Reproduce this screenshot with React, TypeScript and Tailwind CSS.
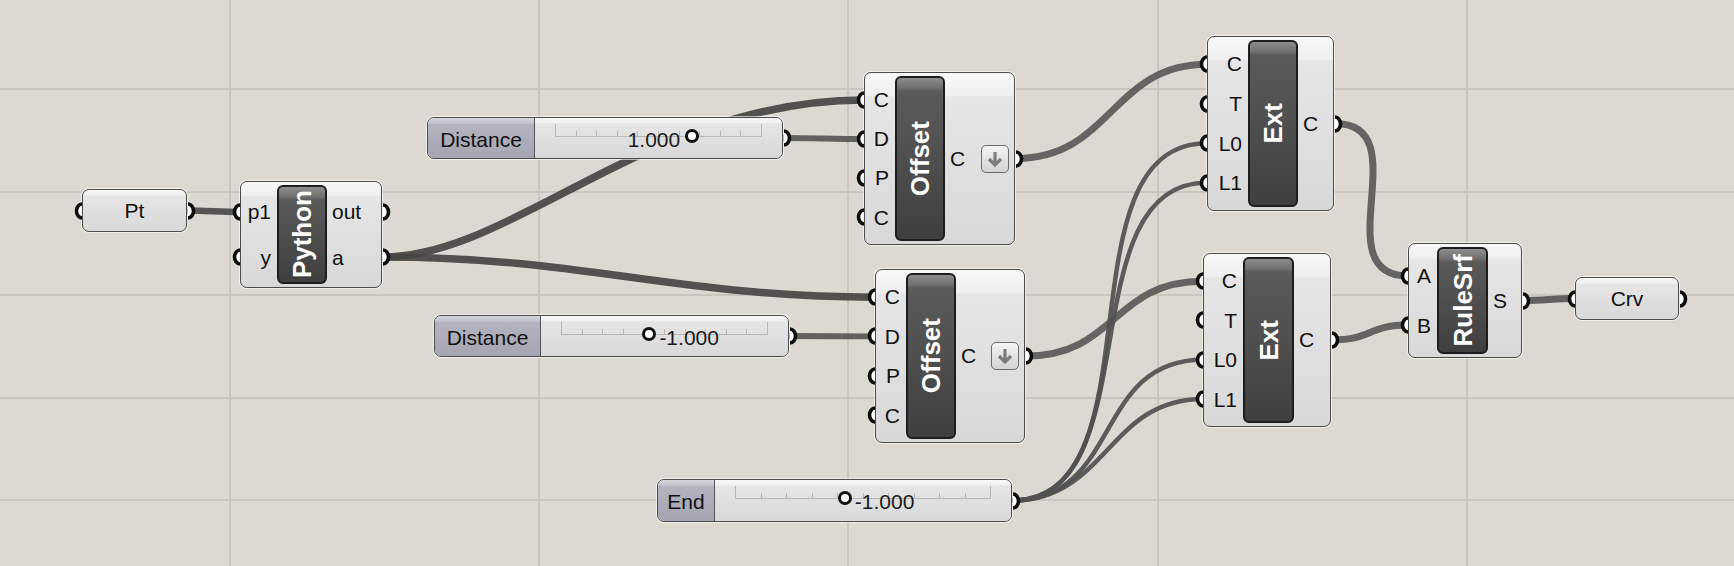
import React from "react";

type Comp = {
  name: string;
  x: number;
  y: number;
  h: number;
  lw: number;
  dw: number;
  rw: number;
  cls: string;
  lcls: string;
  dcls: string;
  rcls: string;
  ins: string[];
  outs: string[];
  button?: boolean;
};

type Param = { label: string; x: number; y: number; w: number; h: number; cls: string };

type Slider = {
  label: string;
  x: number;
  y: number;
  w: number;
  h: number;
  cls: string;
  lcls: string;
  gripCls: string;
  value: string;
  negative: boolean;
};

const bodyBg =
  "bg-[linear-gradient(to_bottom,#f8f8f8_0%,#efefef_13%,#e6e6e6_14%,#d8d8d8_100%)]";
const darkBg =
  "bg-[linear-gradient(to_bottom,#8e8e8e_0px,#6e6e6e_10px,#5a5a5a_13px,#525252_40%,#3f3f3f_100%)]";

const comps: Record<string, Comp> = {
  python: {
    name: "Python",
    x: 240, y: 181, h: 107, lw: 36, dw: 50, rw: 54,
    cls: "left-[240px] top-[181px] h-[107px]",
    lcls: "w-[36px]", dcls: "w-[50px]", rcls: "w-[54px]",
    ins: ["p1", "y"], outs: ["out", "a"],
  },
  offTop: {
    name: "Offset",
    x: 864, y: 72, h: 173, lw: 30, dw: 50, rw: 69,
    cls: "left-[864px] top-[72px] h-[173px]",
    lcls: "w-[30px]", dcls: "w-[50px]", rcls: "w-[69px]",
    ins: ["C", "D", "P", "C"], outs: ["C"], button: true,
  },
  offBot: {
    name: "Offset",
    x: 875, y: 269, h: 174, lw: 30, dw: 50, rw: 68,
    cls: "left-[875px] top-[269px] h-[174px]",
    lcls: "w-[30px]", dcls: "w-[50px]", rcls: "w-[68px]",
    ins: ["C", "D", "P", "C"], outs: ["C"], button: true,
  },
  extTop: {
    name: "Ext",
    x: 1207, y: 36, h: 175, lw: 40, dw: 50, rw: 35,
    cls: "left-[1207px] top-[36px] h-[175px]",
    lcls: "w-[40px]", dcls: "w-[50px]", rcls: "w-[35px]",
    ins: ["C", "T", "L0", "L1"], outs: ["C"],
  },
  extBot: {
    name: "Ext",
    x: 1203, y: 253, h: 174, lw: 39, dw: 51, rw: 36,
    cls: "left-[1203px] top-[253px] h-[174px]",
    lcls: "w-[39px]", dcls: "w-[51px]", rcls: "w-[36px]",
    ins: ["C", "T", "L0", "L1"], outs: ["C"],
  },
  rule: {
    name: "RuleSrf",
    x: 1408, y: 243, h: 115, lw: 28, dw: 51, rw: 33,
    cls: "left-[1408px] top-[243px] h-[115px]",
    lcls: "w-[28px]", dcls: "w-[51px]", rcls: "w-[33px]",
    ins: ["A", "B"], outs: ["S"],
  },
};

const params: Record<string, Param> = {
  pt: { label: "Pt", x: 82, y: 189, w: 105, h: 43, cls: "left-[82px] top-[189px] w-[105px] h-[43px]" },
  crv: { label: "Crv", x: 1575, y: 277, w: 104, h: 43, cls: "left-[1575px] top-[277px] w-[104px] h-[43px]" },
};

const sliders: Record<string, Slider> = {
  distTop: {
    label: "Distance", x: 427, y: 117, w: 356, h: 42,
    cls: "left-[427px] top-[117px] w-[356px] h-[42px]", lcls: "w-[107px]",
    gripCls: "left-[66.3%]", value: "1.000", negative: false,
  },
  distBot: {
    label: "Distance", x: 434, y: 315, w: 355, h: 42,
    cls: "left-[434px] top-[315px] w-[355px] h-[42px]", lcls: "w-[106px]",
    gripCls: "left-[42.7%]", value: "-1.000", negative: true,
  },
  end: {
    label: "End", x: 657, y: 479, w: 355, h: 43,
    cls: "left-[657px] top-[479px] w-[355px] h-[43px]", lcls: "w-[57px]",
    gripCls: "left-[42.9%]", value: "-1.000", negative: true,
  },
};

// port geometry, same numbers as the flex layout (border 1.5, py 7)
const inY = (c: Comp, i: number) => c.y + 8.5 + ((i + 0.5) * (c.h - 17)) / c.ins.length;
const outY = (c: Comp, i: number) => c.y + 8.5 + ((i + 0.5) * (c.h - 17)) / c.outs.length;
const outX = (c: Comp) => c.x + 3 + c.lw + c.dw + c.rw;

function wire(x1: number, y1: number, x2: number, y2: number, a: number, b = a) {
  return `M${x1} ${y1} C${x1 + a} ${y1} ${x2 - b} ${y2} ${x2} ${y2}`;
}

function Port({ side }: { side: "in" | "out" }) {
  if (side === "in")
    return (
      <svg width="14" height="20" viewBox="0 0 14 20" className="absolute left-[-11.5px] top-1/2 -translate-y-1/2">
        <path d="M10 3 A5.5 7 0 0 0 10 17" fill="#fff" stroke="#0d0d0d" strokeWidth="3.6" />
      </svg>
    );
  return (
    <svg width="14" height="20" viewBox="0 0 14 20" className="absolute right-[-11.5px] top-1/2 -translate-y-1/2">
      <path d="M4 3 A5.5 7 0 0 1 4 17" fill="#fff" stroke="#0d0d0d" strokeWidth="3.6" />
    </svg>
  );
}

function Component({ c }: { c: Comp }) {
  return (
    <div
      className={`absolute flex rounded-[7px] border-[1.5px] border-[#4b4b4b] shadow-[0_0_0_1px_rgba(255,255,255,0.6)] ${bodyBg} ${c.cls}`}
    >
      <div className={`flex flex-col py-[7px] ${c.lcls}`}>
        {c.ins.map((l, i) => (
          <div key={i} className="relative flex flex-1 items-center justify-end pr-[6px]">
            {l}
            <Port side="in" />
          </div>
        ))}
      </div>
      <div
        className={`my-[3px] flex items-center justify-center rounded-[6px] border-2 border-[#1d1d1d] ${darkBg} ${c.dcls}`}
      >
        <span className="rotate-180 text-[26px] leading-none font-bold text-white [writing-mode:vertical-rl]">
          {c.name}
        </span>
      </div>
      <div className={`flex flex-col py-[7px] ${c.rcls}`}>
        {c.outs.map((l, i) => (
          <div key={i} className="relative flex flex-1 items-center pl-[5px]">
            {l}
            {c.button && (
              <div className="ml-auto mr-[5px] flex h-[28px] w-[28px] items-center justify-center rounded-[5px] border-[1.5px] border-[#6c6c6c] bg-[linear-gradient(to_bottom,#f4f4f4,#d4d4d4)]">
                <svg width="20" height="20" viewBox="0 0 20 20">
                  <path d="M10 3 V16 M4 10 L10 16 L16 10" fill="none" stroke="#7c7c7c" strokeWidth="3.2" />
                </svg>
              </div>
            )}
            <Port side="out" />
          </div>
        ))}
      </div>
    </div>
  );
}

function ParamNode({ p }: { p: Param }) {
  return (
    <div
      className={`absolute flex items-center justify-center rounded-[7px] border-[1.5px] border-[#4b4b4b] shadow-[0_0_0_1px_rgba(255,255,255,0.6)] ${bodyBg} ${p.cls}`}
    >
      <div className="absolute inset-y-0 left-0 w-0">
        <Port side="in" />
      </div>
      {p.label}
      <div className="absolute inset-y-0 right-0 w-0">
        <Port side="out" />
      </div>
    </div>
  );
}

function SliderNode({ s }: { s: Slider }) {
  const ticks = Array.from({ length: 11 }, (_, i) => i);
  return (
    <div
      className={`absolute flex rounded-[7px] border-[1.5px] border-[#4b4b4b] shadow-[0_0_0_1px_rgba(255,255,255,0.6)] ${s.cls}`}
    >
      <div
        className={`flex items-center justify-center rounded-l-[6px] border-r-[1.5px] border-[#555] pt-[3px] bg-[linear-gradient(to_bottom,#d6d6de_0%,#c0c0cb_14%,#b4b4c0_15%,#a5a5b1_100%)] ${s.lcls}`}
      >
        {s.label}
      </div>
      <div className={`relative flex-1 rounded-r-[6px] ${bodyBg}`}>
        <div className="absolute left-5 right-5 top-[7px] flex h-[12px] items-end justify-between border-b border-[#b7b7b7]">
          {ticks.map((i) => (
            <div
              key={i}
              className={i === 0 || i === 10 ? "h-[12px] w-px bg-[#b7b7b7]" : "h-[5px] w-px bg-[#b7b7b7]"}
            />
          ))}
          <div className={`absolute bottom-0 h-0 w-0 ${s.gripCls}`}>
            <div className="absolute h-[14px] w-[14px] -translate-x-1/2 -translate-y-1/2 rounded-full border-[3.5px] border-[#111] bg-white" />
            <div
              className={
                s.negative
                  ? "absolute left-[10px] top-[-8px] whitespace-nowrap text-[21px] leading-[24px] text-[#1a1a1a]"
                  : "absolute right-[12px] top-[-8px] whitespace-nowrap text-[21px] leading-[24px] text-[#1a1a1a]"
              }
            >
              {s.value}
            </div>
          </div>
        </div>
      </div>
      <div className="absolute inset-y-0 right-0 w-0">
        <Port side="out" />
      </div>
    </div>
  );
}

export default function App() {
  const { python, offTop, offBot, extTop, extBot, rule } = comps;
  const { pt, crv } = params;
  const { distTop, distBot, end } = sliders;

  const endX = end.x + end.w;
  const endY = end.y + end.h / 2;

  const wires = [
    { d: wire(pt.x + pt.w, pt.y + pt.h / 2, python.x, inY(python, 0), 20), w: 6.5, c: "#4a4a48" },
    { d: wire(outX(python), outY(python, 1), offTop.x, inY(offTop, 0), 130, 215), w: 7.5, c: "#454543" },
    { d: wire(outX(python), outY(python, 1), offBot.x, inY(offBot, 0), 200), w: 7.5, c: "#454543" },
    { d: wire(distTop.x + distTop.w, distTop.y + distTop.h / 2, offTop.x, inY(offTop, 1), 30), w: 6, c: "#575755" },
    { d: wire(distBot.x + distBot.w, distBot.y + distBot.h / 2, offBot.x, inY(offBot, 1), 30), w: 6, c: "#575755" },
    { d: wire(outX(offTop), outY(offTop, 0), extTop.x, inY(extTop, 0), 95), w: 7, c: "#5a5a58" },
    { d: wire(outX(offBot), outY(offBot, 0), extBot.x, inY(extBot, 0), 90), w: 7, c: "#5a5a58" },
    { d: wire(outX(extTop), outY(extTop, 0), rule.x, inY(rule, 0), 85), w: 7, c: "#5a5a58" },
    { d: wire(outX(extBot), outY(extBot, 0), rule.x, inY(rule, 1), 40), w: 7, c: "#5a5a58" },
    { d: wire(outX(rule), outY(rule, 0), crv.x, crv.y + crv.h / 2, 20), w: 7, c: "#575755" },
    { d: wire(endX, endY, extTop.x, inY(extTop, 2), 150), w: 4.5, c: "#505050" },
    { d: wire(endX, endY, extTop.x, inY(extTop, 3), 140), w: 4.5, c: "#505050" },
    { d: wire(endX, endY, extBot.x, inY(extBot, 2), 110), w: 4.5, c: "#505050" },
    { d: wire(endX, endY, extBot.x, inY(extBot, 3), 95), w: 4.5, c: "#505050" },
  ];

  const vLines = [230, 539, 848, 1158, 1467];
  const hLines = [89, 192, 295, 398, 500];

  return (
    <div className="relative h-[566px] w-[1734px] overflow-hidden bg-[#dcd9d3] font-['Liberation_Sans',Arial,sans-serif] text-[21px] text-[#111]">
      <svg width="1734" height="566" className="absolute left-0 top-0">
        {vLines.map((x) => (
          <line key={x} x1={x} y1={0} x2={x} y2={566} stroke="#c9c6c0" strokeWidth="2" />
        ))}
        {hLines.map((y) => (
          <line key={y} x1={0} y1={y} x2={1734} y2={y} stroke="#c9c6c0" strokeWidth="2" />
        ))}
        {wires.map((w, i) => (
          <path key={i} d={w.d} fill="none" stroke={w.c} strokeOpacity="0.92" strokeWidth={w.w} />
        ))}
      </svg>

      <ParamNode p={pt} />
      <ParamNode p={crv} />
      <SliderNode s={distTop} />
      <SliderNode s={distBot} />
      <SliderNode s={end} />
      {Object.entries(comps).map(([k, c]) => (
        <Component key={k} c={c} />
      ))}
    </div>
  );
}
